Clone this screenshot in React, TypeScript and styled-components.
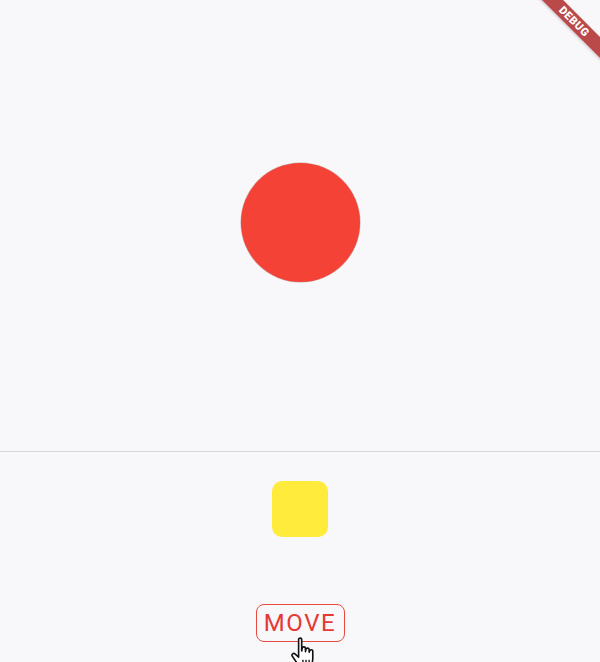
import React from "react";
import styled, { createGlobalStyle } from "styled-components";

const Global = createGlobalStyle`
  html, body { margin: 0; padding: 0; background: #f8f7fa; }
  body { font-family: Roboto, "Noto Sans", sans-serif; overflow: hidden; }
`;

const Page = styled.div`
  position: relative;
  width: 600px;
  height: 662px;
  background: #f8f7fa;
  display: flex;
  flex-direction: column;
  overflow: hidden;
`;

const TopArea = styled.div`
  height: 445px;
  display: flex;
  align-items: center;
  justify-content: center;
`;

const Ball = styled.div`
  width: 119px;
  height: 119px;
  border-radius: 50%;
  background: #f44336;
  box-shadow: 0 0 0 0.5px rgba(120, 40, 30, 0.35);
`;

const Divider = styled.div`
  height: 1px;
  margin-top: 6px;
  background: #d8d5db;
`;

const Bottom = styled.div`
  flex: 1;
  display: flex;
  flex-direction: column;
  align-items: center;
  padding-top: 29px;
`;

const Square = styled.div`
  width: 56px;
  height: 56px;
  border-radius: 10px;
  background: #ffeb3b;
`;

const MoveButton = styled.button`
  position: relative;
  margin-top: 67px;
  width: 89px;
  height: 38px;
  border: 1px solid #e74a3f;
  border-radius: 8px;
  background: transparent;
  color: #e53935;
  font-family: Roboto, sans-serif;
  font-size: 24px;
  letter-spacing: 1.6px;
  padding: 0;
  display: flex;
  align-items: center;
  justify-content: center;
  cursor: pointer;
`;

const Cursor = styled.svg`
  position: absolute;
  left: 33px;
  top: 31px;
`;

const Banner = styled.div`
  position: absolute;
  top: 14px;
  right: -26px;
  width: 104px;
  height: 15px;
  background: rgba(170, 30, 30, 0.8);
  transform: rotate(45deg);
  display: flex;
  align-items: center;
  justify-content: center;
  color: #fff;
  font-family: Roboto, sans-serif;
  font-weight: 900;
  font-size: 11px;
  letter-spacing: 0.5px;
  box-shadow: 0 1px 3px rgba(0, 0, 0, 0.2);
`;

export default function App() {
  return (
    <Page>
      <Global />
      <TopArea>
        <Ball />
      </TopArea>
      <Divider />
      <Bottom>
        <Square />
        <MoveButton>
          MOVE
          <Cursor width="32" height="35" viewBox="0 0 26 28">
            <path
              d="M7 2.5 C7 1.2 9.5 1.2 9.5 2.5 L9.5 12 L10 9.5 C10 8.3 12.5 8.3 12.5 9.5 L12.6 12.5 L13 10.5 C13 9.3 15.5 9.3 15.5 10.5 L15.6 13 L16 11.8 C16.2 10.6 18.5 10.8 18.5 12 L18.5 18 C18.5 22 16.5 25 13.5 25 L10.5 25 C8.5 25 7 23.5 5.5 21.5 L1.8 16 C1 14.8 2.8 13.2 4 14.3 L7 17 Z"
              fill="#fff"
              stroke="#111"
              strokeWidth="1.3"
              strokeLinejoin="round"
            />
            <path d="M10.5 19 V23 M13 19 V23 M15.5 19 V23" stroke="#111" strokeWidth="1.1" />
          </Cursor>
        </MoveButton>
      </Bottom>
      <Banner>DEBUG</Banner>
    </Page>
  );
}
